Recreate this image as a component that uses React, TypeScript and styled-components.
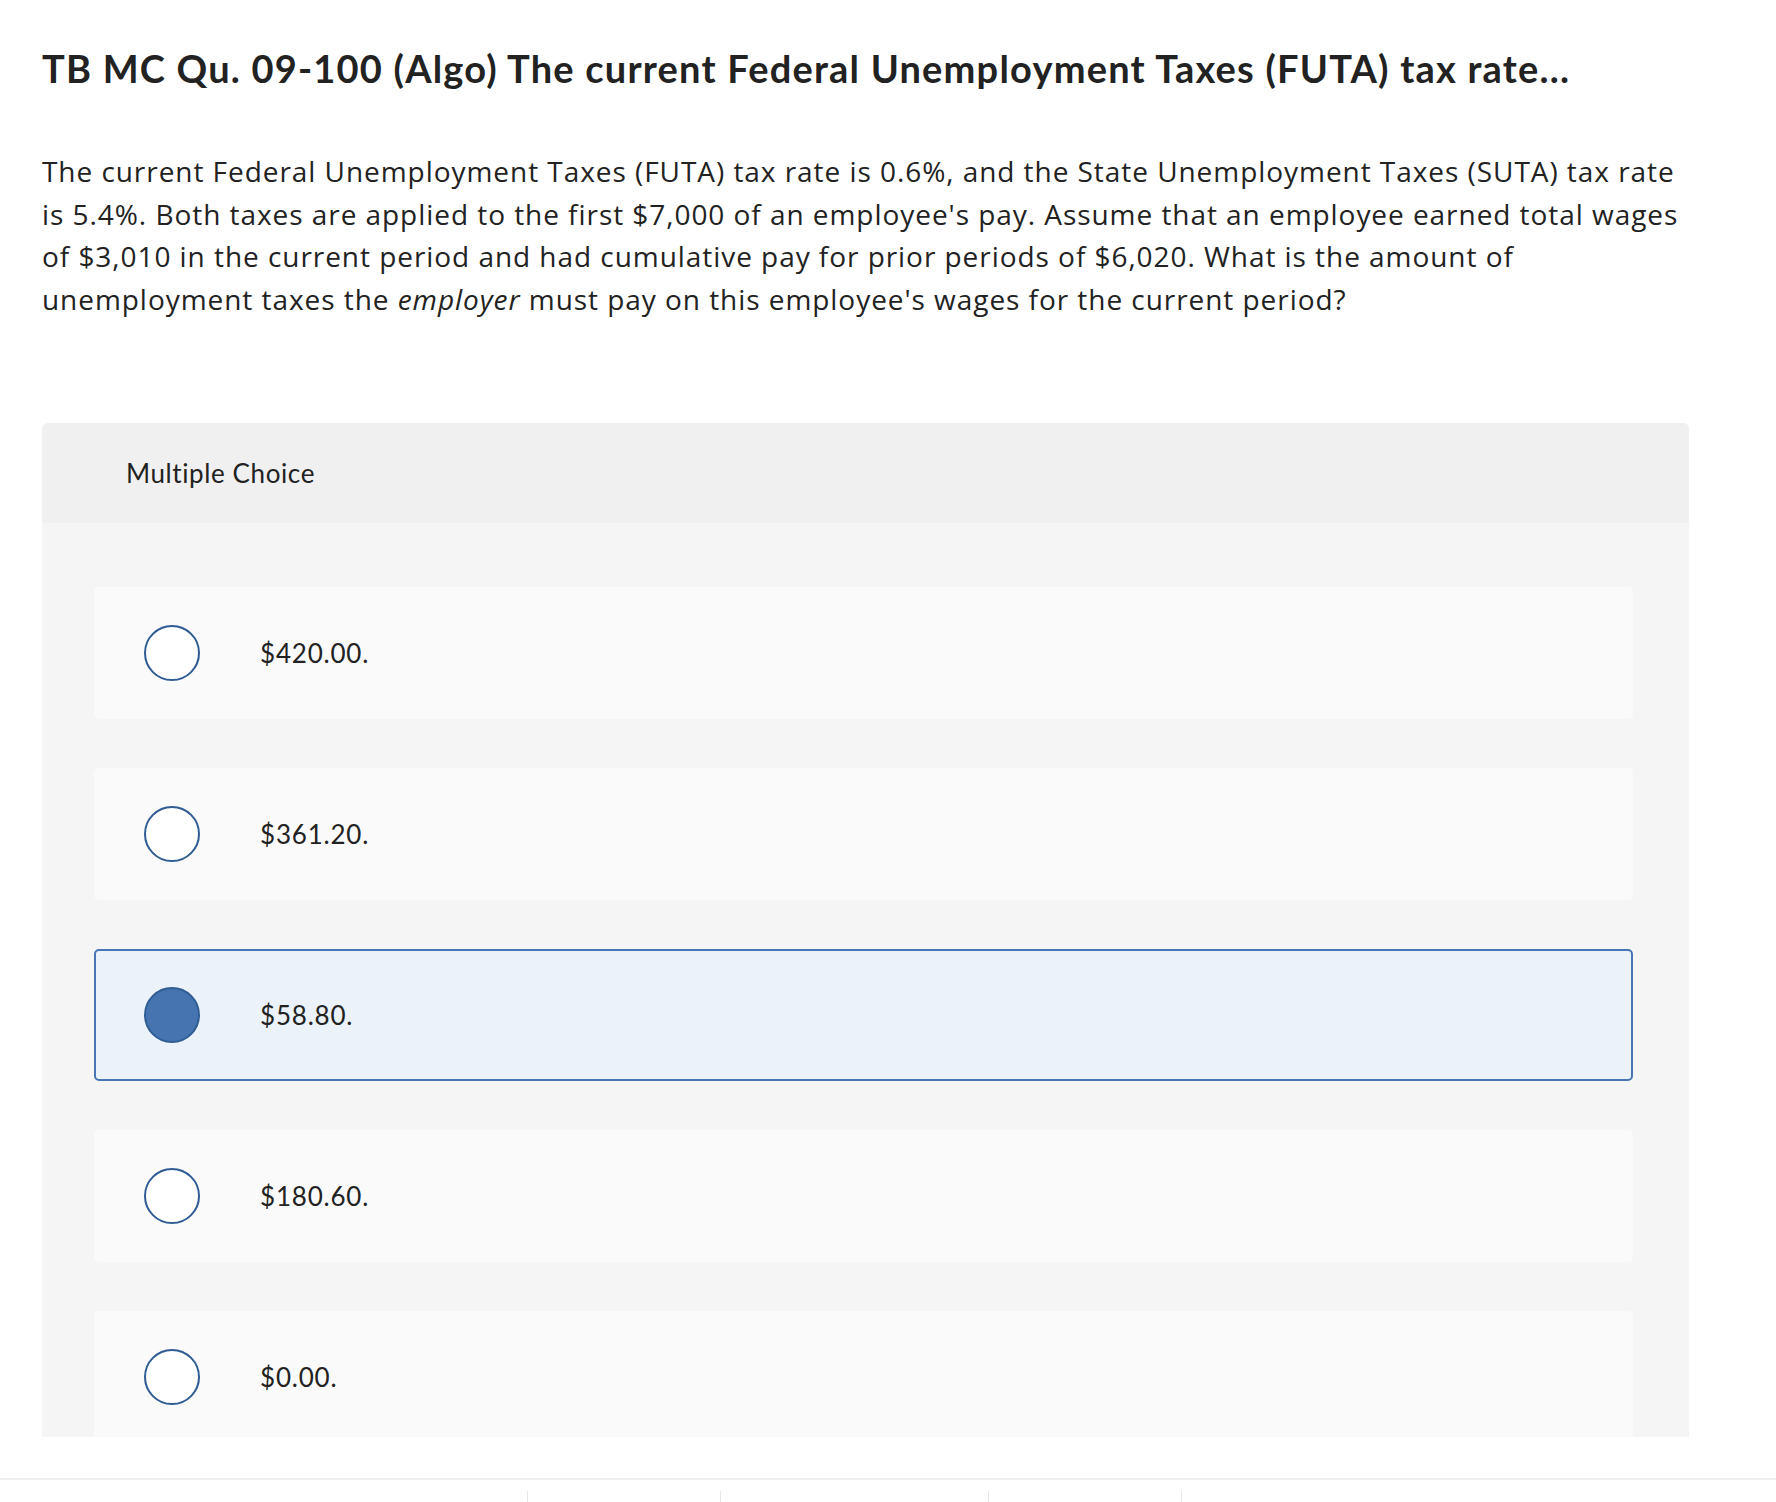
import styled, { createGlobalStyle } from "styled-components";

interface Choice {
  id: string;
  label: string;
}

const CHOICES: Choice[] = [
  { id: "a", label: "$420.00." },
  { id: "b", label: "$361.20." },
  { id: "c", label: "$58.80." },
  { id: "d", label: "$180.60." },
  { id: "e", label: "$0.00." },
];

const SELECTED_ID = "c";

const GlobalStyle = createGlobalStyle`
  html, body {
    margin: 0;
    padding: 0;
    background: #ffffff;
  }
  body {
    font-family: Lato, "Liberation Sans", Arial, sans-serif;
    color: #222222;
  }
  * {
    box-sizing: border-box;
  }
`;

const Page = styled.div`
  display: flex;
  flex-direction: column;
  width: 1776px;
  height: 1502px;
  overflow: hidden;
`;

const Main = styled.main`
  height: 1437px;
  overflow: hidden;
  padding: 0 87px 0 42px;
`;

const Title = styled.h1`
  margin: 0;
  padding-top: 44px;
  font-size: 38px;
  line-height: 48px;
  font-weight: 700;
  color: #222222;
  letter-spacing: 1.2px;
  white-space: nowrap;
`;

const Question = styled.p`
  margin: 58px 0 0;
  font-family: "Open Sans", Lato, sans-serif;
  font-size: 28px;
  line-height: 42.5px;
  font-weight: 400;
  letter-spacing: 0.95px;
  color: #222222;
  white-space: nowrap;

  em {
    font-style: italic;
  }
`;

const Panel = styled.section`
  margin-top: 103px;
  background: #f5f5f5;
  border-radius: 6px 6px 0 0;
`;

const PanelHeader = styled.div`
  display: flex;
  align-items: center;
  height: 100px;
  padding-left: 84px;
  background: #f0f0f0;
  border-radius: 6px 6px 0 0;
  font-size: 26px;
  letter-spacing: 0.6px;
  color: #222222;
`;

const OptionList = styled.div`
  display: flex;
  flex-direction: column;
  gap: 49px;
  padding: 64px 56px 0 52px;
`;

const Option = styled.label<{ $selected: boolean }>`
  display: flex;
  align-items: center;
  height: 132px;
  flex-shrink: 0;
  padding-left: 48px;
  border-radius: 5px;
  border: 2px solid ${({ $selected }) => ($selected ? "#4776b6" : "transparent")};
  background: ${({ $selected }) => ($selected ? "#ecf2fa" : "#fafafa")};
  cursor: pointer;
`;

const Radio = styled.span<{ $selected: boolean }>`
  display: inline-block;
  width: 56px;
  height: 56px;
  flex-shrink: 0;
  border-radius: 50%;
  border: 2px solid #2e5c93;
  background: ${({ $selected }) => ($selected ? "#4674b1" : "#ffffff")};
`;

const OptionText = styled.span`
  margin-left: 60px;
  font-size: 26px;
  letter-spacing: 0.8px;
  color: #222222;
`;

const Footer = styled.footer`
  margin-top: 41px;
  border-top: 2px solid #efefef;
  flex: 1;
`;

const FooterNav = styled.nav`
  display: flex;
  padding: 11px 0 0 527px;
  height: 100%;
`;

const FooterItem = styled.div<{ $width: number }>`
  width: ${({ $width }) => $width}px;
  border-left: 1px solid #e6e6e6;
`;

const App = () => {
  return (
    <Page>
      <GlobalStyle />
      <Main>
        <Title>
          TB MC Qu. 09-100 (Algo) The current Federal Unemployment Taxes (FUTA) tax rate...
        </Title>
        <Question>
          The current Federal Unemployment Taxes (FUTA) tax rate is 0.6%, and the State
          Unemployment Taxes (SUTA) tax rate
          <br />
          is 5.4%. Both taxes are applied to the first $7,000 of an employee's pay. Assume
          that an employee earned total wages
          <br />
          of $3,010 in the current period and had cumulative pay for prior periods of
          $6,020. What is the amount of
          <br />
          unemployment taxes the <em>employer</em> must pay on this employee's wages for
          the current period?
        </Question>
        <Panel>
          <PanelHeader>Multiple Choice</PanelHeader>
          <OptionList>
            {CHOICES.map((choice) => {
              const selected = choice.id === SELECTED_ID;
              return (
                <Option key={choice.id} $selected={selected}>
                  <Radio $selected={selected} />
                  <OptionText>{choice.label}</OptionText>
                </Option>
              );
            })}
          </OptionList>
        </Panel>
      </Main>
      <Footer>
        <FooterNav>
          <FooterItem $width={193} />
          <FooterItem $width={268} />
          <FooterItem $width={193} />
          <FooterItem $width={1} />
        </FooterNav>
      </Footer>
    </Page>
  );
};

export default App;
